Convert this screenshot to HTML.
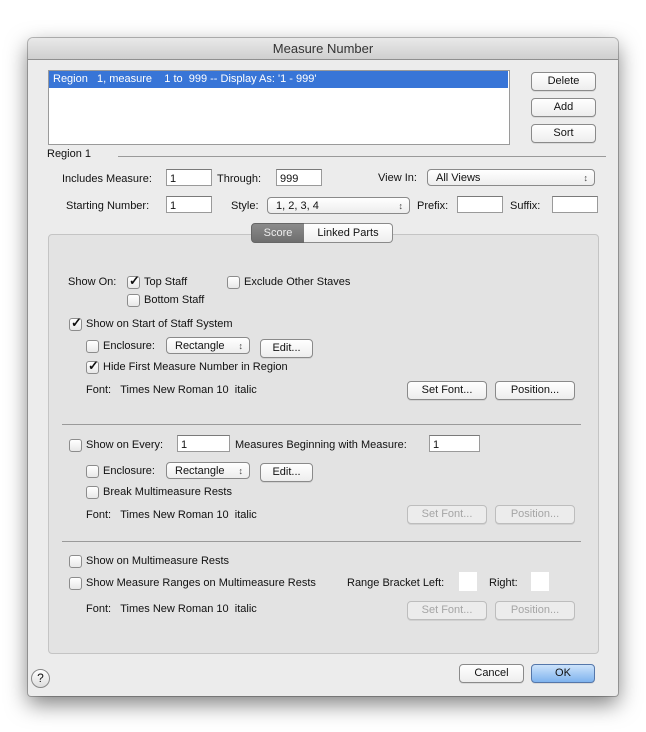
<!DOCTYPE html>
<html><head><style>
body{margin:0;width:646px;height:732px;background:#fff;position:relative;overflow:hidden;font-family:"Liberation Sans",sans-serif;font-size:11px;color:#111}
.a{position:absolute;white-space:nowrap}
#win{position:absolute;left:28px;top:38px;width:590px;height:658px;background:#ececec;border-radius:5px 5px 3px 3px;box-shadow:0 8px 22px rgba(0,0,0,.5),0 0 0 1px rgba(0,0,0,.25)}
#title{position:absolute;left:0;top:0;width:590px;height:21px;background:linear-gradient(#e9e9e9,#cfcfcf);border-bottom:1px solid #8f8f8f;border-radius:5px 5px 0 0;text-align:center;font-size:13px;line-height:21px;color:#333}
.btn{position:absolute;height:17px;border:1px solid #8a8a8a;border-radius:4px;background:linear-gradient(#fff,#ededed);text-align:center;line-height:17px;font-size:11px;box-shadow:0 1px 0 rgba(0,0,0,.08)}
.dis{color:#a5a5a5;border-color:#bdbdbd;background:#ececec}
.tf{position:absolute;height:17px;background:#fff;border:1px solid #9a9a9a;border-top-color:#7a7a7a;line-height:18px;padding-left:3px;box-sizing:border-box}
.cb{position:absolute;width:11px;height:11px;border:1px solid #8c8c8c;border-radius:3px;background:linear-gradient(#fff,#e8e8e8)}
.pop{position:absolute;height:17px;border:1px solid #8a8a8a;border-radius:4px;background:linear-gradient(#fff,#ededed);line-height:17px;padding-left:8px;box-sizing:border-box}
.pop:after{content:"\2195";position:absolute;right:6px;top:0;font-size:9px;color:#444}
.chk{position:absolute;left:1px;top:-4px;font-size:13px;color:#111;font-weight:bold}
.hr{position:absolute;height:1px;background:#9a9a9a}
</style></head><body>
<div id="win">
<div id="title">Measure Number</div>
<div class="a" style="left:20px;top:32px;width:460px;height:73px;background:#fff;border:1px solid #9a9a9a"></div>
<div class="a" style="left:21px;top:33px;width:459px;height:17px;background:#3875d7;color:#fff;line-height:17px;padding-left:4px;box-sizing:border-box;font-size:11px">Region &nbsp;&nbsp;1, measure &nbsp;&nbsp;&nbsp;1 to &nbsp;999 -- Display As: '1 - 999'</div>
<div class="btn" style="left:503px;top:34px;width:63px">Delete</div>
<div class="btn" style="left:503px;top:60px;width:63px">Add</div>
<div class="btn" style="left:503px;top:86px;width:63px">Sort</div>
<div class="a" style="left:19px;top:110px">Region 1</div>
<div class="hr" style="left:90px;top:118px;width:488px"></div>
<div class="a" style="left:34px;top:135px">Includes Measure:</div>
<div class="tf" style="left:138px;top:131px;width:46px">1</div>
<div class="a" style="left:189px;top:135px">Through:</div>
<div class="tf" style="left:248px;top:131px;width:46px">999</div>
<div class="a" style="left:350px;top:134px">View In:</div>
<div class="pop" style="left:399px;top:131px;width:168px">All Views</div>
<div class="a" style="left:38px;top:162px">Starting Number:</div>
<div class="tf" style="left:138px;top:158px;width:46px">1</div>
<div class="a" style="left:203px;top:162px">Style:</div>
<div class="pop" style="left:239px;top:159px;width:143px">1, 2, 3, 4</div>
<div class="a" style="left:389px;top:162px">Prefix:</div>
<div class="tf" style="left:429px;top:158px;width:46px"></div>
<div class="a" style="left:482px;top:162px">Suffix:</div>
<div class="tf" style="left:524px;top:158px;width:46px"></div>
<div class="a" style="left:20px;top:196px;width:549px;height:418px;background:#e3e3e3;border:1px solid #c4c4c4;border-radius:4px"></div>
<div class="a" style="left:223px;top:185px;width:52px;height:18px;background:linear-gradient(#8b8b8b,#6e6e6e);border:1px solid #666;border-radius:4px 0 0 4px;color:#eee;text-align:center;line-height:18px">Score</div>
<div class="a" style="left:276px;top:185px;width:88px;height:18px;background:linear-gradient(#fff,#eee);border:1px solid #8a8a8a;border-left:none;border-radius:0 4px 4px 0;text-align:center;line-height:18px">Linked Parts</div>
<div class="a" style="left:40px;top:238px">Show On:</div>
<div class="cb" style="left:99px;top:238px"><span class="chk">✓</span></div>
<div class="a" style="left:116px;top:238px">Top Staff</div>
<div class="cb" style="left:199px;top:238px"></div>
<div class="a" style="left:216px;top:238px">Exclude Other Staves</div>
<div class="cb" style="left:99px;top:256px"></div>
<div class="a" style="left:116px;top:256px">Bottom Staff</div>
<div class="cb" style="left:41px;top:280px"><span class="chk">✓</span></div>
<div class="a" style="left:58px;top:280px">Show on Start of Staff System</div>
<div class="cb" style="left:58px;top:302px"></div>
<div class="a" style="left:75px;top:302px">Enclosure:</div>
<div class="pop" style="left:138px;top:299px;width:84px">Rectangle</div>
<div class="btn" style="left:232px;top:301px;width:51px">Edit...</div>
<div class="cb" style="left:58px;top:323px"><span class="chk">✓</span></div>
<div class="a" style="left:75px;top:323px">Hide First Measure Number in Region</div>
<div class="a" style="left:58px;top:346px">Font: &nbsp;&nbsp;Times New Roman 10 &nbsp;italic</div>
<div class="btn" style="left:379px;top:343px;width:78px">Set Font...</div>
<div class="btn" style="left:467px;top:343px;width:78px">Position...</div>
<div class="hr" style="left:34px;top:386px;width:519px"></div>
<div class="cb" style="left:41px;top:401px"></div>
<div class="a" style="left:58px;top:401px">Show on Every:</div>
<div class="tf" style="left:149px;top:397px;width:53px">1</div>
<div class="a" style="left:207px;top:401px">Measures Beginning with Measure:</div>
<div class="tf" style="left:401px;top:397px;width:51px">1</div>
<div class="cb" style="left:58px;top:427px"></div>
<div class="a" style="left:75px;top:427px">Enclosure:</div>
<div class="pop" style="left:138px;top:424px;width:84px">Rectangle</div>
<div class="btn" style="left:232px;top:425px;width:51px">Edit...</div>
<div class="cb" style="left:58px;top:448px"></div>
<div class="a" style="left:75px;top:448px">Break Multimeasure Rests</div>
<div class="a" style="left:58px;top:471px">Font: &nbsp;&nbsp;Times New Roman 10 &nbsp;italic</div>
<div class="btn dis" style="left:379px;top:467px;width:78px">Set Font...</div>
<div class="btn dis" style="left:467px;top:467px;width:78px">Position...</div>
<div class="hr" style="left:34px;top:503px;width:519px"></div>
<div class="cb" style="left:41px;top:517px"></div>
<div class="a" style="left:58px;top:517px">Show on Multimeasure Rests</div>
<div class="cb" style="left:41px;top:539px"></div>
<div class="a" style="left:58px;top:539px">Show Measure Ranges on Multimeasure Rests</div>
<div class="a" style="left:319px;top:539px">Range Bracket Left:</div>
<div class="a" style="left:431px;top:534px;width:18px;height:19px;background:#fff"></div>
<div class="a" style="left:461px;top:539px">Right:</div>
<div class="a" style="left:503px;top:534px;width:18px;height:19px;background:#fff"></div>
<div class="a" style="left:58px;top:565px">Font: &nbsp;&nbsp;Times New Roman 10 &nbsp;italic</div>
<div class="btn dis" style="left:379px;top:563px;width:78px">Set Font...</div>
<div class="btn dis" style="left:467px;top:563px;width:78px">Position...</div>
<div class="btn" style="left:431px;top:626px;width:63px">Cancel</div>
<div class="btn" style="left:503px;top:626px;width:62px;background:linear-gradient(#cde3fb,#7fb3ee);border-color:#5577aa">OK</div>
<div class="a" style="left:3px;top:631px;width:17px;height:17px;border:1px solid #888;border-radius:50%;background:linear-gradient(#fff,#ddd);text-align:center;line-height:17px;font-size:12px">?</div>
</div>
</body></html>
